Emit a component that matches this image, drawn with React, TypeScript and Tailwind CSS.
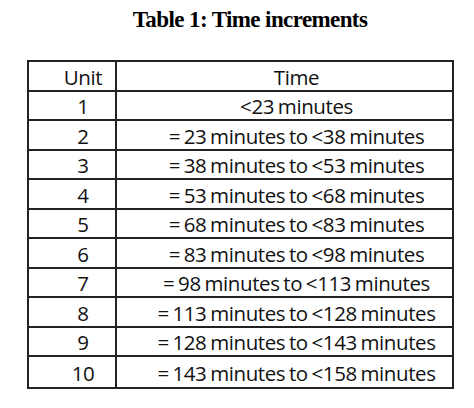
import React from "react";

const rows: [string, string][] = [
  ["1", "<23 minutes"],
  ["2", "= 23 minutes to <38 minutes"],
  ["3", "= 38 minutes to <53 minutes"],
  ["4", "= 53 minutes to <68 minutes"],
  ["5", "= 68 minutes to <83 minutes"],
  ["6", "= 83 minutes to <98 minutes"],
  ["7", "= 98 minutes to <113 minutes"],
  ["8", "= 113 minutes to <128 minutes"],
  ["9", "= 128 minutes to <143 minutes"],
  ["10", "= 143 minutes to <158 minutes"],
];

function Row({ a, b, last }: { a: string; b: string; last?: boolean }) {
  return (
    <div
      className={`grid grid-cols-[88px_1fr] h-[29.5px] ${last ? "" : "border-b-2 border-[#222]"}`}
    >
      <div className="flex items-center justify-center pl-[22px] pt-[2px] border-r-2 border-[#222]">
        {a}
      </div>
      <div className="flex items-center justify-center pl-[24px] pt-[2px]">{b}</div>
    </div>
  );
}

export default function App() {
  return (
    <div className="w-[474px] h-[408px] bg-white text-[#111] overflow-hidden">
      <div
        className="pt-[6px] pl-[26px] text-center font-bold text-[23px] leading-[28px] tracking-[-0.6px] text-black"
        style={{ fontFamily: '"Liberation Serif", "Times New Roman", serif' }}
      >
        Table 1: Time increments
      </div>
      <div className="pl-[27px] pt-[26px]">
        <div
          className="w-[427px] border-2 border-[#222] text-[20.5px] leading-none tracking-[-0.4px] [word-spacing:-1.2px]"
          style={{ fontFamily: '"Open Sans", "Liberation Sans", sans-serif' }}
        >
          <Row a="Unit" b="Time" />
          {rows.map(([a, b], i) => (
            <Row key={a} a={a} b={b} last={i === rows.length - 1} />
          ))}
        </div>
      </div>
    </div>
  );
}
